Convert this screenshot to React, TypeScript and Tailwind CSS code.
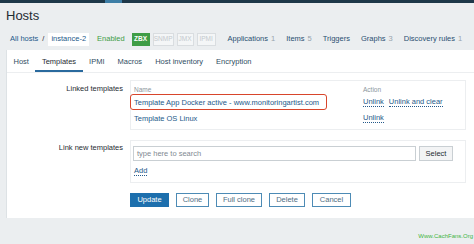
import React from 'react';

const NAV = [
  { label: 'Applications', count: '1' },
  { label: 'Items', count: '5' },
  { label: 'Triggers', count: '' },
  { label: 'Graphs', count: '3' },
  { label: 'Discovery rules', count: '1' },
];

const TABS = ['Host', 'Templates', 'IPMI', 'Macros', 'Host inventory', 'Encryption'];

const Badge: React.FC<{ label: string; w: string; on?: boolean }> = ({ label, w, on }) => (
  <span
    className={`flex h-[13px] items-center justify-center border text-[6.5px] leading-none ${w} ${
      on ? 'border-[#3f9d46] bg-[#3f9d46] font-bold text-white' : 'border-[#d9dde0] bg-[#f4f6f7] text-[#c3c9cd]'
    }`}
  >
    {label}
  </span>
);

export default function App() {
  return (
    <div
      className="flex h-[244px] w-[474px] flex-col overflow-hidden whitespace-nowrap bg-[#ebeef0] text-[7.5px] text-[#1f2c33]"
      style={{ fontFamily: '"Liberation Sans", Arial, sans-serif' }}
    >
      {/* top strip */}
      <div className="flex h-[3px] shrink-0 bg-[#1d3849]">
        <div className="w-[105px]" />
        <div className="w-[17px] bg-[#3d7ea6]" />
      </div>

      <h1 className="h-[25px] shrink-0 pl-[6px] pt-[5px] text-[13px] leading-[15px] text-[#1f2c33]">Hosts</h1>

      {/* host nav */}
      <div className="flex h-[22px] shrink-0 items-center pl-[10px]">
        <a className="text-[#24598a]">All hosts</a>
        <span className="px-[4px] text-[#1f2c33]">/</span>
        <span className="flex h-[13px] items-center bg-white px-[3px] text-[#24598a]">instance-2</span>
        <span className="ml-[8px] text-[#3f9d46]">Enabled</span>
        <div className="ml-[7px] flex gap-[3px]">
          <Badge label="ZBX" w="w-[18px]" on />
          <Badge label="SNMP" w="w-[21px]" />
          <Badge label="JMX" w="w-[17px]" />
          <Badge label="IPMI" w="w-[19px]" />
        </div>
        <div className="ml-[12px] flex gap-[11px]">
          {NAV.map((n) => (
            <span key={n.label} className="text-[#2a4f70]">
              {n.label}
              {n.count && <span className="ml-[3px] text-[#98a4ad]">{n.count}</span>}
            </span>
          ))}
        </div>
      </div>

      {/* main panel */}
      <div className="ml-[6px] h-[168px] shrink-0 border-l border-[#dde2e5] bg-white">
        <div className="flex h-[23px] border-b border-[#eceef0]">
          {TABS.map((t) => (
            <div
              key={t}
              className={`flex h-[22px] items-center border-b-2 px-[6.5px] pt-[3px] ${
                t === 'Templates' ? 'border-[#2a6a9e] text-[#1f2c33]' : 'border-transparent text-[#2f4d63]'
              }`}
            >
              {t}
            </div>
          ))}
        </div>

        <div className="flex flex-col gap-[10px] pt-[7px]">
          {/* linked templates */}
          <div className="flex gap-[7px]">
            <div className="w-[116px] pt-[4px] text-right leading-[9px]">Linked templates</div>
            <div className="relative h-[50px] w-[336px] border border-[#eceef0] pl-[3px] pt-[4px]">
              <div className="grid grid-cols-[229px_1fr] leading-[9px]">
                <div className="h-[10px] text-[6.5px] text-[#8a959d]">Name</div>
                <div className="h-[10px] text-[6.5px] text-[#8a959d]">Action</div>
                <div className="flex h-[15px] items-center text-[#24598a]">
                  Template App Docker active - www.monitoringartist.com
                </div>
                <div className="flex h-[15px] items-center gap-[5px] text-[#24598a]">
                  <span className="border-b border-dotted border-[#24598a] leading-[8px]">Unlink</span>
                  <span className="border-b border-dotted border-[#24598a] leading-[8px]">Unlink and clear</span>
                </div>
                <div className="flex h-[16px] items-center text-[#24598a]">Template OS Linux</div>
                <div className="flex h-[16px] items-center text-[#24598a]">
                  <span className="border-b border-dotted border-[#24598a] leading-[8px]">Unlink</span>
                </div>
              </div>
              <div className="absolute left-[-1px] top-[13px] h-[16px] w-[197px] rounded-[3px] border-[1.5px] border-[#d8452b]" />
            </div>
          </div>

          {/* link new templates */}
          <div className="flex gap-[7px]">
            <div className="w-[116px] pt-[3px] text-right leading-[9px]">Link new templates</div>
            <div className="flex h-[43px] w-[336px] flex-col border border-[#eceef0] pl-[2px] pt-[5px]">
              <div className="flex gap-[3px]">
                <div className="flex h-[15px] w-[283px] items-center border border-[#c9cfd3] pl-[3px] text-[#7f8a92]">
                  type here to search
                </div>
                <div className="flex h-[15px] w-[34px] items-center justify-center border border-[#c9cfd3] bg-[#f3f4f5] text-[#1f2c33]">
                  Select
                </div>
              </div>
              <div className="mt-[6px] pl-[1px] leading-[8px]">
                <span className="border-b border-dotted border-[#24598a] text-[#24598a]">Add</span>
              </div>
            </div>
          </div>

          {/* buttons */}
          <div className="flex gap-[7px] pl-[123px]">
            <button className="h-[14px] w-[39px] bg-[#1d6fad] text-white">Update</button>
            <button className="h-[14px] w-[33px] border border-[#4d8bb5] bg-white text-[#4f6e84]">Clone</button>
            <button className="h-[14px] w-[46px] border border-[#4d8bb5] bg-white text-[#4f6e84]">Full clone</button>
            <button className="h-[14px] w-[36px] border border-[#4d8bb5] bg-white text-[#4f6e84]">Delete</button>
            <button className="h-[14px] w-[39px] border border-[#4d8bb5] bg-white text-[#4f6e84]">Cancel</button>
          </div>
        </div>
      </div>

      <div className="flex flex-1 items-end justify-end pb-[3px] pr-[1px]">
        <span className="text-[6px] text-[#3fb53f]">Www.CachFans.Org</span>
      </div>
    </div>
  );
}
